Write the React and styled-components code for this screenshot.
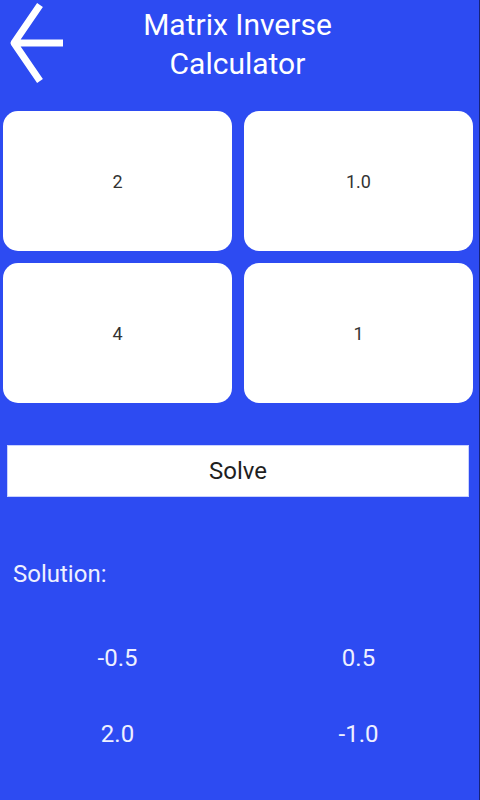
import React from "react";
import styled, { createGlobalStyle } from "styled-components";

const GlobalStyle = createGlobalStyle`
  html, body {
    margin: 0;
    padding: 0;
    background: #2d4bf2;
  }
  body {
    font-family: Roboto, "Noto Sans", "Liberation Sans", sans-serif;
  }
`;

const Screen = styled.div`
  width: 479px;
  height: 800px;
  background: #2d4bf2;
  border-right: 1px solid #16237a;
  display: flex;
  flex-direction: column;
  overflow: hidden;
`;

const Header = styled.header`
  display: grid;
  grid-template-columns: 66px 1fr 70px;
  align-items: start;
  height: 111px;
`;

const BackButton = styled.button`
  border: 0;
  background: none;
  padding: 0;
  margin: 0;
  width: 66px;
  height: 86px;
  display: block;
  cursor: pointer;
`;

const Title = styled.h1`
  margin: 5px 0 0;
  font-size: 30px;
  line-height: 39px;
  font-weight: 400;
  color: #ffffff;
  text-align: center;
`;

const MatrixGrid = styled.div`
  display: grid;
  grid-template-columns: 229px 229px;
  grid-auto-rows: 140px;
  gap: 12px;
  padding-left: 3px;
`;

const Cell = styled.div`
  background: #ffffff;
  border-radius: 15px;
  display: flex;
  align-items: center;
  justify-content: center;
  font-size: 18px;
  color: #333333;
`;

const SolveButton = styled.button`
  margin: 42px 0 0 7px;
  width: 462px;
  height: 52px;
  background: #ffffff;
  border: 1px solid #c9d2ff;
  font-family: inherit;
  font-size: 24px;
  color: #1f1f1f;
  padding: 0;
  cursor: pointer;
`;

const SolutionLabel = styled.div`
  margin: 63px 0 0 13px;
  font-size: 24px;
  line-height: 28px;
  color: #eef0ff;
`;

const ResultGrid = styled.div`
  margin-top: 32px;
  display: grid;
  grid-template-columns: 229px 229px;
  column-gap: 12px;
  grid-auto-rows: 76px;
  padding-left: 3px;
`;

const ResultValue = styled.div`
  display: flex;
  align-items: center;
  justify-content: center;
  font-size: 24px;
  color: #eef0ff;
`;

// Back arrow: two diagonals meeting at the tip, plus the shaft
const BackArrow = () => (
  <svg width="66" height="86" viewBox="0 0 66 86" aria-hidden="true">
    <path
      d="M40 5 L14 43 L40 81 M14 43 H63"
      fill="none"
      stroke="#ffffff"
      strokeWidth="7"
      strokeLinejoin="round"
      strokeLinecap="butt"
    />
  </svg>
);

const matrix = ["2", "1.0", "4", "1"];
const inverse = ["-0.5", "0.5", "2.0", "-1.0"];

export default function App() {
  return (
    <>
      <GlobalStyle />
      <Screen>
        <Header>
          <BackButton aria-label="Back">
            <BackArrow />
          </BackButton>
          <Title>
            Matrix Inverse
            <br />
            Calculator
          </Title>
        </Header>
        <MatrixGrid>
          {matrix.map((v, i) => (
            <Cell key={i}>{v}</Cell>
          ))}
        </MatrixGrid>
        <SolveButton>Solve</SolveButton>
        <SolutionLabel>Solution:</SolutionLabel>
        <ResultGrid>
          {inverse.map((v, i) => (
            <ResultValue key={i}>{v}</ResultValue>
          ))}
        </ResultGrid>
      </Screen>
    </>
  );
}
